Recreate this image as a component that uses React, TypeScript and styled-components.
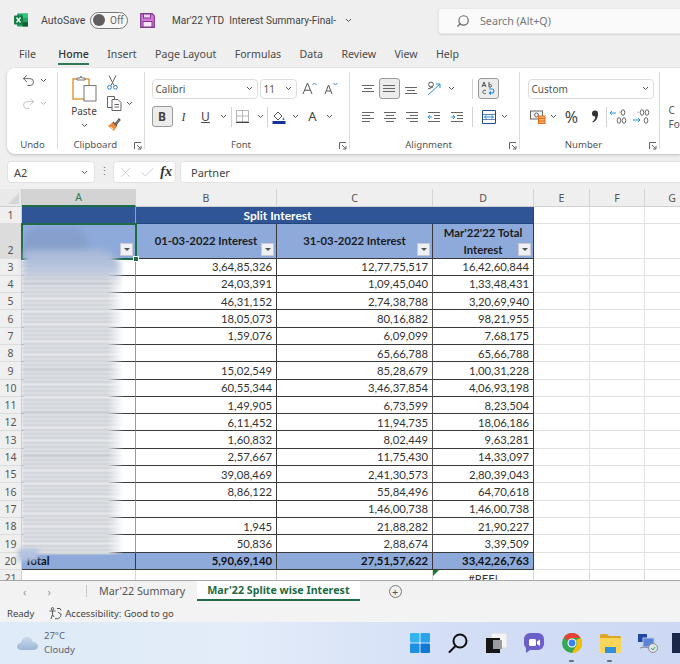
import styled, { createGlobalStyle } from "styled-components";
import { Check, Redo2, Search, Undo2, X } from "lucide-react";

const uiFont = `"Noto Sans", "Open Sans", sans-serif`;
const cellFont = `Lato, "Liberation Sans", sans-serif`;

const GlobalStyle = createGlobalStyle`
  html, body {
    margin: 0;
    padding: 0;
    background: #efefef;
  }
  * {
    box-sizing: border-box;
  }
`;

const Page = styled.div`
  width: 680px;
  height: 664px;
  overflow: hidden;
  display: flex;
  flex-direction: column;
  font-family: ${uiFont};
  color: #444;
  background: #efefef;
`;

/* title bar */
const TitleBar = styled.div`
  height: 40px;
  flex: none;
  display: flex;
  align-items: center;
  padding-left: 14px;
  font-family: Roboto, ${uiFont};
  font-size: 10.5px;
`;

const AutoSave = styled.span`
  margin-left: 13px;
  width: 44px;
  flex: none;
`;

const Toggle = styled.div`
  margin-left: 5px;
  width: 38px;
  height: 17px;
  flex: none;
  border: 1px solid #777;
  border-radius: 9px;
  background: #f7f7f7;
  display: flex;
  align-items: center;
  padding-left: 2px;
  gap: 5px;
  font-size: 10px;
  color: #666;
`;

const ToggleKnob = styled.div`
  width: 12px;
  height: 12px;
  border-radius: 50%;
  background: #5f5f5f;
`;

const SaveSlot = styled.div`
  margin-left: 12px;
  display: flex;
`;

const DocName = styled.span`
  margin-left: 17px;
  width: 169px;
  flex: none;
  font-size: 10.1px;
  white-space: pre;
`;

const SearchBox = styled.div`
  margin-left: 83px;
  flex: 1;
  height: 26px;
  margin-top: 2px;
  background: #fafafa;
  border: 1px solid #e8e8e8;
  border-right: none;
  border-radius: 4px 0 0 4px;
  box-shadow: 0 1px 2px rgba(0, 0, 0, 0.12);
  display: flex;
  align-items: center;
  padding-left: 17px;
  gap: 10px;
  font-family: ${uiFont};
  font-size: 10.7px;
  color: #777;
`;

/* menu */
const Menu = styled.div`
  height: 28px;
  flex: none;
  display: flex;
  align-items: center;
  padding-left: 19px;
  gap: 18.4px;
  font-size: 10.6px;
`;

const MenuItem = styled.span<{ $active?: boolean }>`
  position: relative;
  line-height: 16px;
  color: ${({ $active }) => ($active ? "#333" : "#4a4a4a")};
  font-weight: ${({ $active }) => ($active ? 500 : 400)};
  ${({ $active }) =>
    $active &&
    `margin: 0 0 0 4px;
    &::after {
      content: "";
      position: absolute;
      left: 0;
      right: 0;
      bottom: -3px;
      height: 2px;
      background: #2f7a55;
    }`}
`;

/* ribbon */
const Ribbon = styled.div`
  height: 86px;
  flex: none;
  margin-left: 7px;
  padding-top: 4px;
  background: #fff;
  border-radius: 8px 0 0 8px;
  box-shadow: 0 1px 3px rgba(0, 0, 0, 0.2);
  display: flex;
  overflow: hidden;
`;

const Group = styled.div<{ $width: number; $noLine?: boolean }>`
  position: relative;
  width: ${({ $width }) => $width}px;
  flex: none;
  height: 82px;
  display: flex;
  flex-direction: column;
  ${({ $noLine }) =>
    !$noLine &&
    `&::after {
      content: "";
      position: absolute;
      right: 0;
      top: 0;
      bottom: 5px;
      width: 1px;
      background: #dcdcdc;
    }`}
`;

const GroupBody = styled.div<{ $left?: number }>`
  flex: 1;
  padding: 6px 0 0 ${({ $left }) => $left ?? 0}px;
  display: flex;
  flex-direction: column;
  gap: 7px;
  min-height: 0;
`;

const GroupLabel = styled.div<{ $shift?: boolean }>`
  height: 18px;
  flex: none;
  text-align: center;
  font-size: 9.6px;
  line-height: 18px;
  color: #555;
  padding-right: ${({ $shift }) => ($shift ? 12 : 0)}px;
`;

const Launcher = styled.div`
  position: absolute;
  right: 3px;
  bottom: 4px;
  display: flex;
`;

const ToolRow = styled.div`
  height: 21px;
  display: flex;
  align-items: center;
`;

const Tool = styled.div<{ $w: number; $selected?: boolean; $h?: number }>`
  width: ${({ $w }) => $w}px;
  height: ${({ $h }) => $h ?? 21}px;
  flex: none;
  display: flex;
  align-items: center;
  justify-content: center;
  border-radius: 3px;
  font-size: 13px;
  color: #444;
  ${({ $selected }) =>
    $selected &&
    `background: #ececec; border: 1px solid #9a9a9a;`}
`;

const Divider = styled.div`
  width: 1px;
  height: 20px;
  flex: none;
  background: #d2d2d2;
`;

const Combo = styled.div<{ $w: number }>`
  width: ${({ $w }) => $w}px;
  height: 20px;
  flex: none;
  margin-right: 2px;
  border: 1px solid #dedede;
  border-radius: 4px;
  background: #fff;
  display: flex;
  align-items: center;
  justify-content: space-between;
  padding: 0 4px 0 3px;
  font-size: 10px;
  color: #555;
`;

const UndoStack = styled.div`
  flex: 1;
  display: flex;
  flex-direction: column;
  padding-left: 14px;
  gap: 7px;
`;

const UndoRow = styled.div`
  height: 16px;
  display: flex;
  align-items: center;
  gap: 4px;
`;

const ClipBody = styled.div`
  flex: 1;
  display: flex;
  padding: 3px 0 0 9px;
  min-height: 0;
`;

const PasteCol = styled.div`
  width: 34px;
  display: flex;
  flex-direction: column;
  align-items: center;
  font-size: 10px;
  line-height: 13px;
  color: #444;
`;

const PasteText = styled.div`
  margin: 3px 0 5px;
`;

const ClipTools = styled.div`
  margin: -2px 0 0 6px;
  display: flex;
  flex-direction: column;
  gap: 2px;
`;

const ClipTool = styled.div`
  height: 19px;
  display: flex;
  align-items: center;
  gap: 4px;
`;

const Glyph = styled.span<{ $size?: number; $weight?: number; $serif?: boolean }>`
  font-size: ${({ $size }) => $size ?? 12}px;
  font-weight: ${({ $weight }) => $weight ?? 400};
  font-family: ${({ $serif }) => ($serif ? `"Liberation Serif", serif` : "inherit")};
  line-height: 1;
`;

const ClippedStyles = styled.div`
  padding: 31px 0 0 9px;
  font-size: 10px;
  line-height: 14px;
  color: #555;
`;

/* formula bar */
const FormulaBar = styled.div`
  height: 22px;
  margin: 7px 0 6px;
  padding-left: 7px;
  flex: none;
  display: flex;
  align-items: stretch;
`;

const NameBox = styled.div`
  width: 88px;
  background: #fff;
  border: 1px solid #e2e2e2;
  border-radius: 4px;
  display: flex;
  align-items: center;
  justify-content: space-between;
  padding: 0 6px;
  font-size: 11px;
  color: #444;
`;

const GripDots = styled.div`
  width: 18px;
  text-align: center;
  font-size: 11px;
  line-height: 20px;
  color: #777;
`;

const FormulaButtons = styled.div`
  width: 63px;
  background: #fff;
  border: 1px solid #e2e2e2;
  border-radius: 4px;
  display: flex;
  align-items: center;
  justify-content: space-between;
  padding: 0 3px 0 3px;
`;

const FxMark = styled.span`
  font-family: "Liberation Serif", serif;
  font-style: italic;
  font-size: 14px;
  font-weight: 700;
  color: #333;
`;

const FormulaInput = styled.div`
  flex: 1;
  margin-left: 4px;
  background: #fff;
  border: 1px solid #e2e2e2;
  border-right: none;
  border-radius: 4px 0 0 4px;
  display: flex;
  align-items: center;
  padding-left: 10px;
  font-size: 11px;
  color: #444;
`;

/* sheet */
const Sheet = styled.div`
  position: relative;
  height: 391px;
  flex: none;
  overflow: hidden;
  background: #fff;
  display: grid;
  grid-template-columns: 22px 114px 141px 156px 101px 56px 55px 55px;
  grid-template-rows: 18px 17px 34.5px repeat(17, 17.3px) 17px 17px;
  font-family: ${cellFont};
  font-size: 11.3px;
  color: #333;
`;

const Corner = styled.div`
  background: #e9e9e9;
  border-right: 1px solid #cfcfcf;
  border-bottom: 1px solid #cfcfcf;
  position: relative;
  &::after {
    content: "";
    position: absolute;
    right: 2px;
    bottom: 2px;
    border-style: solid;
    border-width: 0 0 11px 11px;
    border-color: transparent transparent #d6d6d6 transparent;
  }
`;

const ColHead = styled.div<{ $selected?: boolean }>`
  background: ${({ $selected }) => ($selected ? "#d3d3d3" : "#efefef")};
  color: ${({ $selected }) => ($selected ? "#2b7a53" : "#555")};
  border-right: 1px solid #d4d4d4;
  border-bottom: ${({ $selected }) => ($selected ? "2px solid #1f6b45" : "1px solid #d0d0d0")};
  display: flex;
  align-items: center;
  justify-content: center;
  font-family: ${uiFont};
  font-size: 10.5px;
`;

const RowHead = styled.div<{ $selected?: boolean }>`
  background: ${({ $selected }) => ($selected ? "#dcdcdc" : "#efefef")};
  border-bottom: 1px solid #dcdcdc;
  border-right: 1px solid #cfcfcf;
  display: flex;
  align-items: flex-end;
  justify-content: center;
  padding-bottom: 1px;
  font-family: ${uiFont};
  font-size: 10.5px;
  color: #555;
`;

const Band = styled.div`
  position: relative;
  grid-column: span 4;
  background: #2f5597;
  color: #fff;
  font-weight: 700;
  font-size: 12px;
  border-right: 1px solid #22447f;
  border-bottom: 1px solid #22447f;
  display: flex;
  align-items: center;
  justify-content: center;
  &::before {
    content: "";
    position: absolute;
    left: 113px;
    top: 0;
    bottom: 0;
    width: 1px;
    background: #8aa0c8;
  }
`;

const HeaderCell = styled.div<{ $selected?: boolean }>`
  position: relative;
  background: #8eaadb;
  color: #1c1c1c;
  font-weight: 700;
  font-size: 11.3px;
  line-height: 17px;
  text-align: center;
  display: flex;
  align-items: center;
  justify-content: center;
  border-right: 1px solid #3a3a3a;
  border-bottom: 1px solid #3a3a3a;
  ${({ $selected }) =>
    $selected && `outline: 2px solid #1f6b45; outline-offset: -1px; border: 1px solid #fff; z-index: 1;`}
`;

const FilterButton = styled.div`
  position: absolute;
  right: 2px;
  bottom: 2px;
  width: 13px;
  height: 13px;
  background: #eef0f4;
  border: 1px solid #c5cad6;
  display: flex;
  align-items: center;
  justify-content: center;
  &::after {
    content: "";
    border-style: solid;
    border-width: 3px 3px 0 3px;
    border-color: #555 transparent transparent transparent;
  }
`;

const FillHandle = styled.div`
  position: absolute;
  right: -4px;
  bottom: -4px;
  width: 6px;
  height: 6px;
  background: #1f6b45;
  border: 1px solid #fff;
`;

const Cell = styled.div<{ $line?: string; $bare?: boolean }>`
  position: relative;
  display: flex;
  align-items: center;
  justify-content: flex-end;
  padding-right: 4px;
  border-right: 1px solid ${({ $line, $bare }) => ($bare ? "#e2e2e2" : $line ?? "#3a3a3a")};
  border-bottom: 1px solid ${({ $bare }) => ($bare ? "#e2e2e2" : "#3a3a3a")};
`;

const TotalCell = styled.div<{ $left?: boolean }>`
  background: #8eaadb;
  color: #111;
  font-weight: 700;
  display: flex;
  align-items: center;
  justify-content: ${({ $left }) => ($left ? "flex-start" : "flex-end")};
  padding: 0 4px 0 ${({ $left }) => ($left ? 3 : 0)}px;
  border-top: 1px solid #3a3a3a;
  border-right: 1px solid #3a3a3a;
  border-bottom: 1px solid #3a3a3a;
  margin-top: -1px;
`;

const TailCell = styled.div`
  position: relative;
  display: flex;
  justify-content: center;
  align-items: center;
  border-right: 1px solid #d8d8d8;
`;

const ErrorMark = styled.div`
  position: absolute;
  left: 0;
  top: 0;
  border-style: solid;
  border-width: 6px 6px 0 0;
  border-color: #1a7a2c transparent transparent transparent;
`;

/* blurred names over column A */
const RedactTop = styled.div`
  position: absolute;
  left: 25px;
  top: 40px;
  width: 63px;
  height: 30px;
  background: repeating-linear-gradient(0deg, #7c95c4 0 2px, #90a7d2 2px 4px);
  border-radius: 10px 14px 0 0;
  filter: blur(2px);
  opacity: 0.85;
  pointer-events: none;
  z-index: 2;
`;

const RedactShoulder = styled.div`
  position: absolute;
  left: 24px;
  top: 60px;
  width: 96px;
  height: 34px;
  background: linear-gradient(180deg, #a5b7d8 0%, #b4c2dc 50%, rgba(200, 208, 222, 0) 100%);
  border-radius: 6px 22px 0 0;
  filter: blur(3px);
  pointer-events: none;
  z-index: 3;
`;

const RedactBody = styled.div`
  position: absolute;
  left: 22px;
  top: 72px;
  width: 102px;
  height: 294px;
  background: repeating-linear-gradient(
    180deg,
    #c2c5cc 0 2px,
    #eceef1 2px 4.3px
  );
  -webkit-mask-image: linear-gradient(90deg, #000 84%, transparent 100%);
  mask-image: linear-gradient(90deg, #000 84%, transparent 100%);
  filter: blur(0.9px);
  pointer-events: none;
  z-index: 2;
`;

const RedactFoot = styled.div`
  position: absolute;
  left: 18px;
  top: 360px;
  width: 20px;
  height: 12px;
  background: #b2c2e0;
  filter: blur(2px);
  pointer-events: none;
  z-index: 2;
`;

/* sheet tabs */
const TabBar = styled.div`
  height: 21px;
  flex: none;
  border-top: 1px solid #a8a8a8;
  background: #f2f2f2;
  display: flex;
  align-items: stretch;
  font-size: 10.7px;
`;

const TabNav = styled.div`
  width: 87px;
  flex: none;
  display: flex;
  align-items: center;
  gap: 21px;
  padding-left: 23px;
  color: #999;
  font-size: 11px;
  position: relative;
  &::after {
    content: "";
    position: absolute;
    right: 0;
    top: 4px;
    bottom: 4px;
    width: 1px;
    background: #c8c8c8;
  }
`;

const Tab = styled.div<{ $active?: boolean }>`
  display: flex;
  align-items: center;
  padding: 0 ${({ $active }) => ($active ? 10 : 5)}px;
  margin-left: ${({ $active }) => ($active ? 7 : 7)}px;
  background: ${({ $active }) => ($active ? "#fff" : "transparent")};
  color: ${({ $active }) => ($active ? "#1f6b45" : "#555")};
  font-weight: ${({ $active }) => ($active ? 700 : 400)};
  border-bottom: ${({ $active }) => ($active ? "2px solid #1f6b45" : "none")};
  white-space: nowrap;
`;

const AddSheet = styled.div`
  margin-left: 29px;
  align-self: center;
  width: 13px;
  height: 13px;
  border: 1px solid #777;
  border-radius: 50%;
  display: flex;
  align-items: center;
  justify-content: center;
  font-size: 11px;
  line-height: 1;
  color: #555;
`;

const StatusBar = styled.div`
  height: 21px;
  flex: none;
  background: #f3f3f3;
  display: flex;
  align-items: center;
  padding: 3px 0 0 7px;
  font-size: 9.5px;
  color: #444;
`;

const AccessSlot = styled.div`
  margin-left: 15px;
  margin-right: 3px;
  display: flex;
`;

/* taskbar */
const Taskbar = styled.div`
  height: 42px;
  flex: none;
  background: linear-gradient(90deg, #dfebf8 0%, #e3ecf9 35%, #d2ddf6 70%, #cdd9f4 100%);
  display: flex;
  align-items: center;
`;

const Weather = styled.div`
  width: 401px;
  flex: none;
  display: flex;
  align-items: center;
  gap: 6px;
  padding-left: 17px;
`;

const WeatherText = styled.div`
  font-size: 9.5px;
  line-height: 14px;
  color: #5a6270;
`;

const TaskSlot = styled.div`
  position: relative;
  width: 38px;
  height: 42px;
  flex: none;
  display: flex;
  align-items: center;
  justify-content: center;
`;

const RunningDot = styled.div`
  position: absolute;
  bottom: 2px;
  left: 16px;
  width: 5px;
  height: 2px;
  border-radius: 1px;
  background: #6a6f78;
`;

const DarkTile = styled.div`
  width: 20px;
  height: 20px;
  margin-left: 5px;
  background: #1a2748;
`;

/* drawings */
const Chevron = ({ color = "#555" }: { color?: string }) => (
  <svg width="7" height="5" viewBox="0 0 7 5" fill="none">
    <path d="M1 1l2.5 2.5L6 1" stroke={color} strokeWidth="1" />
  </svg>
);

const ExcelLogo = () => (
  <svg width="14" height="14" viewBox="0 0 14 14">
    <rect x="3" y="0.5" width="11" height="13" rx="1" fill="#21a366" />
    <rect x="8.5" y="0.5" width="5.5" height="4.3" fill="#33c481" />
    <rect x="8.5" y="9.2" width="5.5" height="4.3" fill="#185c37" />
    <rect x="0" y="2.5" width="9" height="9" rx="1" fill="#107c41" />
    <path d="M2.5 4.5l4 5M6.5 4.5l-4 5" stroke="#fff" strokeWidth="1.3" />
  </svg>
);

const SaveIcon = () => (
  <svg width="15" height="15" viewBox="0 0 15 15" fill="none">
    <path d="M.7.7h11.4l2.2 2.2v11.4H.7z" fill="#d877dc" stroke="#7c3a8c" strokeWidth="1.2" />
    <rect x="3.5" y="1" width="7" height="4" fill="#f3d3f4" stroke="#7c3a8c" />
    <rect x="3" y="8.5" width="9" height="5.5" fill="#f8e5f8" stroke="#7c3a8c" />
  </svg>
);

const LauncherIcon = () => (
  <svg width="8" height="8" viewBox="0 0 8 8" fill="none" stroke="#666" strokeWidth="1">
    <path d="M.5 7V.5H7" />
    <path d="M3 3l4 4M7 4v3H4" />
  </svg>
);

const PasteIcon = () => (
  <svg width="25" height="27" viewBox="0 0 25 27" fill="none">
    <rect x="1" y="4" width="16" height="20" fill="#fff" stroke="#e2a04a" strokeWidth="1.6" />
    <path d="M5 5V3h3l1-2 1 2h3v2z" fill="#fff" stroke="#777" />
    <rect x="12" y="10.5" width="12" height="15.5" fill="#fff" stroke="#777" />
  </svg>
);

const CutIcon = () => (
  <svg width="11" height="15" viewBox="0 0 11 15" fill="none">
    <path d="M2 .5l5 10M9 .5l-5 10" stroke="#666" />
    <circle cx="2.500" cy="12.300" r="1.900" stroke="#2a7fd0" />
    <circle cx="8.500" cy="12.300" r="1.900" stroke="#2a7fd0" />
  </svg>
);

const CopyIcon = () => (
  <svg width="15" height="15" viewBox="0 0 15 15" fill="none" stroke="#666">
    <path d="M.5.5h7v11h-7z" />
    <path d="M5 3.500h6l3 3v8H5z" fill="#fff" />
    <path d="M7.500 8.500h4.500M7.500 11h4.500" />
  </svg>
);

const PainterIcon = () => (
  <svg width="14" height="14" viewBox="0 0 14 14">
    <path d="M1 8l5-4 4 4-3 5z" fill="#f08a32" />
    <path d="M6 4l2 2 4-5 1 1-4 5 1 1" fill="none" stroke="#555" strokeWidth="1.2" />
    <path d="M3.5 9l3 2" stroke="#fff" strokeWidth="1" />
  </svg>
);

const BorderIcon = () => (
  <svg width="13" height="13" viewBox="0 0 13 13" fill="none">
    <path d="M.5.5h12v11H.5zM6.5.5v11M.5 6h12" stroke="#b5b5b5" />
    <path d="M0 12.5h13" stroke="#444" />
  </svg>
);

const FillIcon = () => (
  <svg width="14" height="14" viewBox="0 0 14 14" fill="none">
    <path d="M2 6l4-4 4 4-4 4z" fill="#fff" stroke="#555" />
    <path d="M11.5 7l1 2.3c0 1.2-2 1.2-2 0z" fill="#2a8fd8" />
    <rect x="0.5" y="11" width="13" height="3" fill="#16349a" />
  </svg>
);

const GrowFont = ({ up }: { up?: boolean }) => (
  <svg width="15" height="15" viewBox="0 0 15 15" fill="none">
    {up ? (
      <>
        <path d="M1 13L5.5 2 10 13M2.7 9.2h5.6" stroke="#555" />
        <path d="M10.5 4l2-2 2 2" stroke="#2a8fd8" />
      </>
    ) : (
      <>
        <path d="M2 13L5.5 4 9 13M3.3 10h4.4" stroke="#555" />
        <path d="M10.5 2l2 2 2-2" stroke="#2a8fd8" />
      </>
    )}
  </svg>
);

const Lines = ({ rows }: { rows: [number, number, number][] }) => (
  <svg width="14" height="14" viewBox="0 0 14 14" fill="none" stroke="#666">
    {rows.map(([x1, x2, y]) => (
      <path key={y} d={`M${x1} ${y + 0.5}H${x2}`} />
    ))}
  </svg>
);

const IndentIcon = ({ back }: { back?: boolean }) => (
  <svg width="14" height="14" viewBox="0 0 14 14" fill="none">
    <path d="M1 2.5h12M7 5.5h6M7 8.5h6M1 11.5h12" stroke="#666" />
    <path d={back ? "M5 7H1m2-2L1 7l2 2" : "M1 7h4M3 5l2 2-2 2"} stroke="#2a8fd8" />
  </svg>
);

const OrientIcon = () => (
  <svg width="16" height="15" viewBox="0 0 16 15" fill="none">
    <path d="M2 14L14 3M14 3h-4M14 3v4" stroke="#2a8fd8" />
    <circle cx="5" cy="3.5" r="2.4" stroke="#555" />
    <path d="M2 8l5-2" stroke="#555" />
  </svg>
);

const WrapIcon = () => (
  <svg width="15" height="15" viewBox="0 0 15 15" fill="none">
    <path d="M8 12h3c2.500 0 2.500-4 0-4H8M8 12l2-1.500M8 12l2 1.500" stroke="#2a8fd8" strokeWidth="1.100" />
    <path d="M1 6l2-5 2 5M1.800 4.500h2.400M8 1v5M8 4c2-1.500 3.500 .5 2 2H8M5 9.500c-2-1-3.500 0-3 2 .5 1.500 2.500 1.500 3 .5" stroke="#555" />
  </svg>
);

const MergeIcon = () => (
  <svg width="14" height="14" viewBox="0 0 14 14" fill="none">
    <path d="M.5.5h13v13H.5z" stroke="#1f4e8c" />
    <path d="M.5 4.500h13M.5 9.500h13" stroke="#1f4e8c" strokeWidth="0.7" />
    <path d="M2.500 7h9M2.500 7l2-1.500M2.500 7l2 1.500M11.500 7l-2-1.500M11.500 7l-2 1.500" stroke="#2a8fd8" />
  </svg>
);

const AccountingIcon = () => (
  <svg width="16" height="15" viewBox="0 0 16 15" fill="none">
    <rect x="0.5" y="2" width="12" height="8" fill="#f4f4f4" stroke="#666" />
    <circle cx="6.500" cy="6" r="2" stroke="#666" />
    <rect x="8.500" y="7" width="6.500" height="7.500" fill="#f6b26b" stroke="#e06c1a" />
    <path d="M8.500 9.500h6.500M8.500 12h6.500" stroke="#e06c1a" />
  </svg>
);

const CommaIcon = () => (
  <svg width="8" height="13" viewBox="0 0 8 13">
    <circle cx="4" cy="3.500" r="3" fill="#333" />
    <path d="M6.900 3.500c.3 4-1.500 7.500-5 9l-.6-.8c2.200-1.500 3.200-3.700 3-6z" fill="#333" />
  </svg>
);

const DecimalIcon = ({ less }: { less?: boolean }) => (
  <svg width="19" height="15" viewBox="0 0 19 15" fill="none">
    <path d={less ? "M1 4h6M1 4l2-2M1 4l2 2" : "M1 11h7M8 11l-2-2M8 11l-2 2"} stroke="#2a8fd8" />
    <circle cx={less ? 11 : 6} cy="3" r="0.5" fill="#555" />
    <ellipse cx={less ? 14 : 10} cy="3.500" rx="1.800" ry="2.800" stroke="#666" />
    {!less && <ellipse cx="15" cy="3.500" rx="1.800" ry="2.800" stroke="#666" />}
    <ellipse cx={less ? 10 : 14} cy="11.500" rx="1.800" ry="2.800" stroke="#666" />
    {less && <ellipse cx="15" cy="11.500" rx="1.800" ry="2.800" stroke="#666" />}
  </svg>
);

const AccessIcon = () => (
  <svg width="13" height="13" viewBox="0 0 13 13" fill="none" stroke="#555">
    <circle cx="3.500" cy="1.800" r="1.200" />
    <path d="M.5 4h6M3.500 4v3.500L2 12M3.500 7.500L5 10" />
    <path d="M6 11.500c3 1 6-1 6-4M9 5l3 2.500 1-1M8 1.500h3l1 2" />
  </svg>
);

const CloudIcon = () => (
  <svg width="21" height="15" viewBox="0 0 21 15">
    <defs>
      <linearGradient id="cloudFill" x1="0" y1="0" x2="0" y2="1">
        <stop offset="0" stopColor="#c9d8ea" />
        <stop offset="1" stopColor="#9db7d6" />
      </linearGradient>
    </defs>
    <path
      d="M4.500 14C1.500 14 0 12.300 0 10.500 0 8.600 1.600 7 3.700 7 4.500 3.500 7 1 10 1c3 0 5 2 5.500 4.800C18.500 6 21 7.800 21 10.200 21 12.500 19 14 16.500 14z"
      fill="url(#cloudFill)"
    />
  </svg>
);

const WindowsLogo = () => (
  <svg width="20" height="20" viewBox="0 0 20 20">
    <rect x="0" y="0" width="9.500" height="9.500" rx="1" fill="#34b4ef" />
    <rect x="10.500" y="0" width="9.500" height="9.500" rx="1" fill="#28a4ea" />
    <rect x="0" y="10.500" width="9.500" height="9.500" rx="1" fill="#1c90e2" />
    <rect x="10.500" y="10.500" width="9.500" height="9.500" rx="1" fill="#0f78d4" />
  </svg>
);

const TaskSearch = () => (
  <svg width="20" height="20" viewBox="0 0 20 20" fill="none" stroke="#111" strokeWidth="2">
    <circle cx="12" cy="8" r="6.500" />
    <path d="M7.500 13L1.500 19" strokeLinecap="round" />
  </svg>
);

const TaskView = () => (
  <svg width="21" height="20" viewBox="0 0 21 20">
    <rect x="5" y="0" width="16" height="15" rx="1" fill="#f4f4f6" />
    <rect x="5" y="0" width="16" height="15" rx="1" fill="none" stroke="#d8d8dc" />
    <rect x="0" y="5" width="14" height="15" fill="#161616" />
    <rect x="7" y="7" width="9" height="9" fill="#9c9c9c" />
  </svg>
);

const ChatIcon = () => (
  <svg width="20" height="20" viewBox="0 0 20 20">
    <path d="M6 0h8a6 6 0 016 6v5a6 6 0 01-6 6H6l-4 3v-5a6 6 0 01-2-4V6a6 6 0 016-6z" fill="#6b5fc9" />
    <rect x="5" y="6" width="7" height="7" rx="1.500" fill="#fff" />
    <path d="M13 8.500l3-2v6.500l-3-2z" fill="#fff" />
  </svg>
);

const ChromeIcon = () => (
  <svg width="20" height="20" viewBox="0 0 20 20">
    <circle cx="10" cy="10" r="10" fill="#34a853" />
    <path d="M10 0a10 10 0 018.660 5H10a5 5 0 00-4.500 2.800L1.900 4.100A10 10 0 0110 0z" fill="#ea4335" />
    <path d="M18.660 5A10 10 0 0110 20l4.300-7.500A5 5 0 0014 7z" fill="#fbbc04" />
    <circle cx="10" cy="10" r="4.500" fill="#fff" />
    <circle cx="10" cy="10" r="3.400" fill="#3b82f0" />
  </svg>
);

const FolderIcon = () => (
  <svg width="21" height="19" viewBox="0 0 21 19">
    <path d="M0 1.500A1.500 1.500 0 011.500 0H7l2 2h10.500A1.500 1.500 0 0121 3.500V6H0z" fill="#e0a526" />
    <rect x="0" y="4" width="21" height="15" rx="1" fill="#fbd659" />
    <rect x="5" y="13" width="11" height="6" fill="#2f8fd8" />
  </svg>
);

const NetworkIcon = () => (
  <svg width="20" height="20" viewBox="0 0 20 20">
    <rect x="0" y="1" width="9" height="8" fill="#2046a8" />
    <rect x="5" y="5" width="11" height="9" fill="#5a84d8" stroke="#b8c4dc" />
    <path d="M2 15l4-1 5 1" stroke="#7f8aa0" fill="none" />
    <circle cx="15" cy="15" r="4.500" fill="#dfe3ea" stroke="#8c8f96" />
    <path d="M13 15l2 2 2-3" stroke="#3aa655" fill="none" />
  </svg>
);

const rows = [
  { first: "3,64,85,326", second: "12,77,75,517", total: "16,42,60,844" },
  { first: "24,03,391", second: "1,09,45,040", total: "1,33,48,431" },
  { first: "46,31,152", second: "2,74,38,788", total: "3,20,69,940" },
  { first: "18,05,073", second: "80,16,882", total: "98,21,955" },
  { first: "1,59,076", second: "6,09,099", total: "7,68,175" },
  { first: "", second: "65,66,788", total: "65,66,788" },
  { first: "15,02,549", second: "85,28,679", total: "1,00,31,228" },
  { first: "60,55,344", second: "3,46,37,854", total: "4,06,93,198" },
  { first: "1,49,905", second: "6,73,599", total: "8,23,504" },
  { first: "6,11,452", second: "11,94,735", total: "18,06,186" },
  { first: "1,60,832", second: "8,02,449", total: "9,63,281" },
  { first: "2,57,667", second: "11,75,430", total: "14,33,097" },
  { first: "39,08,469", second: "2,41,30,573", total: "2,80,39,043" },
  { first: "8,86,122", second: "55,84,496", total: "64,70,618" },
  { first: "", second: "1,46,00,738", total: "1,46,00,738" },
  { first: "1,945", second: "21,88,282", total: "21,90,227" },
  { first: "50,836", second: "2,88,674", total: "3,39,509" },
];

const menuItems = ["File", "Home", "Insert", "Page Layout", "Formulas", "Data", "Review", "View", "Help"];

const DataRow = ({ index, row }: { index: number; row: (typeof rows)[number] }) => (
  <>
    <RowHead>{index}</RowHead>
    <Cell $line="#9a9a9a" />
    <Cell>{row.first}</Cell>
    <Cell $line="#555">{row.second}</Cell>
    <Cell>{row.total}</Cell>
    <Cell $bare />
    <Cell $bare />
    <Cell $bare />
  </>
);

const App = () => {
  return (
    <Page>
      <GlobalStyle />
      <TitleBar>
        <ExcelLogo />
        <AutoSave>AutoSave</AutoSave>
        <Toggle>
          <ToggleKnob />
          Off
        </Toggle>
        <SaveSlot>
          <SaveIcon />
        </SaveSlot>
        <DocName>Mar'22 YTD  Interest Summary-Final-</DocName>
        <Tool $w={14}>
          <Chevron />
        </Tool>
        <SearchBox>
          <Search size={14} color="#666" style={{ transform: "scaleX(-1)" }} />
          Search (Alt+Q)
        </SearchBox>
      </TitleBar>

      <Menu>
        {menuItems.map((item) => (
          <MenuItem key={item} $active={item === "Home"}>
            {item}
          </MenuItem>
        ))}
      </Menu>

      <Ribbon>
        <Group $width={51}>
          <UndoStack>
            <UndoRow>
              <Undo2 size={15} color="#555" strokeWidth={1.4} />
              <Chevron />
            </UndoRow>
            <UndoRow>
              <Redo2 size={15} color="#bbb" strokeWidth={1.4} />
              <Chevron color="#bbb" />
            </UndoRow>
          </UndoStack>
          <GroupLabel>Undo</GroupLabel>
        </Group>

        <Group $width={86.5}>
          <ClipBody>
            <PasteCol>
              <PasteIcon />
              <PasteText>Paste</PasteText>
              <Chevron />
            </PasteCol>
            <ClipTools>
              <ClipTool>
                <CutIcon />
              </ClipTool>
              <ClipTool>
                <CopyIcon />
                <Chevron />
              </ClipTool>
              <ClipTool>
                <PainterIcon />
              </ClipTool>
            </ClipTools>
          </ClipBody>
          <GroupLabel $shift>Clipboard</GroupLabel>
          <Launcher>
            <LauncherIcon />
          </Launcher>
        </Group>

        <Group $width={205}>
          <GroupBody $left={7}>
            <ToolRow>
              <Combo $w={106}>
                Calibri
                <Chevron />
              </Combo>
              <Combo $w={37}>
                11
                <Chevron />
              </Combo>
              <Tool $w={21}>
                <GrowFont up />
              </Tool>
              <Tool $w={21}>
                <GrowFont />
              </Tool>
            </ToolRow>
            <ToolRow>
              <Tool $w={21} $selected>
                <Glyph $weight={700}>B</Glyph>
              </Tool>
              <Tool $w={22}>
                <Glyph $serif>
                  <i>I</i>
                </Glyph>
              </Tool>
              <Tool $w={22}>
                <Glyph>
                  <u>U</u>
                </Glyph>
              </Tool>
              <Tool $w={14}>
                <Chevron />
              </Tool>
              <Divider />
              <Tool $w={22}>
                <BorderIcon />
              </Tool>
              <Tool $w={13}>
                <Chevron />
              </Tool>
              <Divider />
              <Tool $w={22}>
                <FillIcon />
              </Tool>
              <Tool $w={12}>
                <Chevron />
              </Tool>
              <Tool $w={22}>
                <Glyph $size={13}>A</Glyph>
              </Tool>
              <Tool $w={12}>
                <Chevron />
              </Tool>
            </ToolRow>
          </GroupBody>
          <GroupLabel $shift>Font</GroupLabel>
          <Launcher>
            <LauncherIcon />
          </Launcher>
        </Group>

        <Group $width={170}>
          <GroupBody $left={7}>
            <ToolRow>
              <Tool $w={22}>
                <Lines rows={[[1, 13, 3], [3, 11, 6], [1, 13, 9]]} />
              </Tool>
              <Tool $w={21} $selected>
                <Lines rows={[[1, 13, 3], [1, 13, 6], [1, 13, 9]]} />
              </Tool>
              <Tool $w={22}>
                <Lines rows={[[1, 13, 5], [3, 11, 8], [1, 13, 11]]} />
              </Tool>
              <Tool $w={24}>
                <OrientIcon />
              </Tool>
              <Tool $w={12}>
                <Chevron />
              </Tool>
              <Tool $w={14} />
              <Divider />
              <Tool $w={5} />
              <Tool $w={21} $selected>
                <WrapIcon />
              </Tool>
            </ToolRow>
            <ToolRow>
              <Tool $w={22}>
                <Lines rows={[[1, 13, 2], [1, 9, 5], [1, 13, 8], [1, 9, 11]]} />
              </Tool>
              <Tool $w={22}>
                <Lines rows={[[1, 13, 2], [3, 11, 5], [1, 13, 8], [3, 11, 11]]} />
              </Tool>
              <Tool $w={22}>
                <Lines rows={[[1, 13, 2], [5, 13, 5], [1, 13, 8], [5, 13, 11]]} />
              </Tool>
              <Tool $w={23}>
                <IndentIcon back />
              </Tool>
              <Tool $w={22}>
                <IndentIcon />
              </Tool>
              <Tool $w={4} />
              <Divider />
              <Tool $w={5} />
              <Tool $w={22}>
                <MergeIcon />
              </Tool>
              <Tool $w={10}>
                <Chevron />
              </Tool>
            </ToolRow>
          </GroupBody>
          <GroupLabel $shift>Alignment</GroupLabel>
          <Launcher>
            <LauncherIcon />
          </Launcher>
        </Group>

        <Group $width={140}>
          <GroupBody $left={8}>
            <ToolRow>
              <Combo $w={126}>
                Custom
                <Chevron />
              </Combo>
            </ToolRow>
            <ToolRow>
              <Tool $w={20}>
                <AccountingIcon />
              </Tool>
              <Tool $w={12}>
                <Chevron />
              </Tool>
              <Tool $w={24}>
                <Glyph $size={16}>%</Glyph>
              </Tool>
              <Tool $w={22}>
                <CommaIcon />
              </Tool>
              <Divider />
              <Tool $w={24}>
                <DecimalIcon less />
              </Tool>
              <Tool $w={22}>
                <DecimalIcon />
              </Tool>
            </ToolRow>
          </GroupBody>
          <GroupLabel $shift>Number</GroupLabel>
          <Launcher>
            <LauncherIcon />
          </Launcher>
        </Group>

        <Group $width={21} $noLine>
          <ClippedStyles>
            C
            <br />
            Fo
          </ClippedStyles>
        </Group>
      </Ribbon>

      <FormulaBar>
        <NameBox>
          A2
          <Chevron />
        </NameBox>
        <GripDots>⋮</GripDots>
        <FormulaButtons>
          <X size={17} color="#c8c8c8" strokeWidth={1.2} />
          <Check size={17} color="#c8c8c8" strokeWidth={1.2} />
          <FxMark>fx</FxMark>
        </FormulaButtons>
        <FormulaInput>Partner</FormulaInput>
      </FormulaBar>

      <Sheet>
        <Corner />
        <ColHead $selected>A</ColHead>
        <ColHead>B</ColHead>
        <ColHead>C</ColHead>
        <ColHead>D</ColHead>
        <ColHead>E</ColHead>
        <ColHead>F</ColHead>
        <ColHead>G</ColHead>

        <RowHead>1</RowHead>
        <Band>Split Interest</Band>
        <Cell $bare />
        <Cell $bare />
        <Cell $bare />

        <RowHead $selected>2</RowHead>
        <HeaderCell $selected>
          <FilterButton />
          <FillHandle />
        </HeaderCell>
        <HeaderCell>
          01-03-2022 Interest
          <FilterButton />
        </HeaderCell>
        <HeaderCell>
          31-03-2022 Interest
          <FilterButton />
        </HeaderCell>
        <HeaderCell>
          Mar'22'22 Total
          <br />
          Interest
          <FilterButton />
        </HeaderCell>
        <Cell $bare />
        <Cell $bare />
        <Cell $bare />

        {rows.map((row, i) => (
          <DataRow key={i} index={i + 3} row={row} />
        ))}

        <RowHead>20</RowHead>
        <TotalCell $left>Total</TotalCell>
        <TotalCell>5,90,69,140</TotalCell>
        <TotalCell>27,51,57,622</TotalCell>
        <TotalCell>33,42,26,763</TotalCell>
        <Cell $bare />
        <Cell $bare />
        <Cell $bare />

        <RowHead>21</RowHead>
        <TailCell />
        <TailCell />
        <TailCell />
        <TailCell>
          <ErrorMark />
          #REF!
        </TailCell>
        <TailCell />
        <TailCell />
        <TailCell />

        <RedactBody />
        <RedactShoulder />
        <RedactTop />
        <RedactFoot />
      </Sheet>

      <TabBar>
        <TabNav>
          <span>‹</span>
          <span>›</span>
        </TabNav>
        <Tab>Mar'22 Summary</Tab>
        <Tab $active>Mar'22 Splite wise Interest</Tab>
        <AddSheet>+</AddSheet>
      </TabBar>

      <StatusBar>
        Ready
        <AccessSlot>
          <AccessIcon />
        </AccessSlot>
        Accessibility: Good to go
      </StatusBar>

      <Taskbar>
        <Weather>
          <CloudIcon />
          <WeatherText>
            27°C
            <br />
            Cloudy
          </WeatherText>
        </Weather>
        <TaskSlot>
          <WindowsLogo />
        </TaskSlot>
        <TaskSlot>
          <TaskSearch />
        </TaskSlot>
        <TaskSlot>
          <TaskView />
        </TaskSlot>
        <TaskSlot>
          <ChatIcon />
        </TaskSlot>
        <TaskSlot>
          <ChromeIcon />
          <RunningDot />
        </TaskSlot>
        <TaskSlot>
          <FolderIcon />
          <RunningDot />
        </TaskSlot>
        <TaskSlot>
          <NetworkIcon />
        </TaskSlot>
        <DarkTile />
      </Taskbar>
    </Page>
  );
};

export default App;
